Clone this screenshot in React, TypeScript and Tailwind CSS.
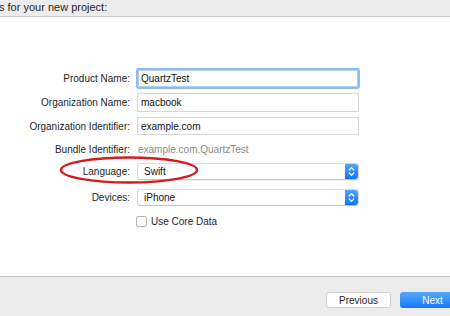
import React from "react";

const font = { fontFamily: '"Liberation Sans", Arial, sans-serif' };

function Label({ children }: { children: React.ReactNode }) {
  return <div className="w-[131px] shrink-0 text-right pr-[1px] text-[10px] text-[#262626]">{children}</div>;
}

function Stepper() {
  return (
    <div className="w-[13px] self-stretch rounded-r-[3px] bg-gradient-to-b from-[#4ea4ff] to-[#0b73f5] flex items-center justify-center">
      <svg width="7" height="11" viewBox="0 0 7 11" fill="none" stroke="white" strokeWidth="1.2" strokeLinecap="round" strokeLinejoin="round">
        <path d="M1.2 4 L3.5 1.7 L5.8 4" />
        <path d="M1.2 7 L3.5 9.3 L5.8 7" />
      </svg>
    </div>
  );
}

export default function App() {
  return (
    <div className="relative w-[450px] h-[316px] overflow-hidden bg-white flex flex-col" style={font}>
      <div className="h-[17px] shrink-0 bg-[#ececec] border-b border-[#c6c6c6] text-[11px] leading-[14px] text-[#262626] -ml-[1px]">
        s for your new project:
      </div>
      <div className="flex-1 bg-white flex flex-col pt-[51px]">
        <div className="flex items-center h-[21px]">
          <Label>Product Name:</Label>
          <div className="ml-[5px] w-[224px] h-[21px] rounded-[3px] border-[2px] border-[#8cbcf2] bg-white flex items-center">
            <div className="flex-1 h-full border border-[#b7cde8] flex items-center pl-[2px] text-[10px] text-[#111]">QuartzTest</div>
          </div>
        </div>
        <div className="flex items-center mt-[4px] h-[19px]">
          <Label>Organization Name:</Label>
          <div className="ml-[6px] w-[222px] h-[19px] border border-[#d6d6d6] bg-white flex items-center pl-[3px] text-[10px] text-[#111]">macbook</div>
        </div>
        <div className="flex items-center mt-[5px] h-[18px]">
          <Label>Organization Identifier:</Label>
          <div className="ml-[6px] w-[222px] h-[18px] border border-[#d6d6d6] bg-white flex items-center pl-[3px] text-[10px] text-[#111]">example.com</div>
        </div>
        <div className="flex items-center mt-[5px] h-[18px]">
          <Label>Bundle Identifier:</Label>
          <div className="ml-[7px] text-[10px] text-[#8a8a8a]">example.com.QuartzTest</div>
        </div>
        <div className="flex items-center mt-[4px] h-[18px]">
          <Label>Language:</Label>
          <div className="ml-[6px] w-[222px] h-[17px] rounded-[3px] border border-[#dcdcdc] border-b-[#c4c4c4] bg-white flex items-stretch shadow-[0_1px_0_rgba(0,0,0,0.05)]">
            <div className="flex-1 flex items-center pl-[6px] text-[10px] text-[#111]">Swift</div>
            <Stepper />
          </div>
        </div>
        <div className="flex items-center mt-[8px] h-[18px]">
          <Label>Devices:</Label>
          <div className="ml-[6px] w-[222px] h-[17px] rounded-[3px] border border-[#dcdcdc] border-b-[#c4c4c4] bg-white flex items-stretch">
            <div className="flex-1 flex items-center pl-[6px] text-[10px] text-[#111]">iPhone</div>
            <Stepper />
          </div>
        </div>
        <div className="flex items-center mt-[8px] h-[14px]">
          <div className="w-[136px] shrink-0" />
          <div className="w-[11px] h-[11px] rounded-[2px] border border-[#b4b4b4] bg-white" />
          <div className="ml-[4px] text-[10px] text-[#262626]">Use Core Data</div>
        </div>
      </div>
      <div className="h-[40px] shrink-0 bg-[#ececec] border-t border-[#c2c2c2] flex items-start pt-[15px]">
        <div className="ml-[326px] w-[65px] shrink-0 h-[16px] rounded-[3px] border border-[#cfcfcf] bg-white flex items-center justify-center text-[10px] text-[#262626]">
          Previous
        </div>
        <div className="ml-[9px] w-[65px] shrink-0 h-[16px] rounded-[3px] bg-gradient-to-b from-[#56a8fd] to-[#1078fb] flex items-center justify-center text-[10px] text-white">
          Next
        </div>
      </div>
      <svg className="absolute left-[57px] top-[154px]" width="144" height="32" viewBox="0 0 144 32">
        <ellipse cx="72" cy="16" rx="68" ry="12.5" fill="none" stroke="#d81a1f" strokeWidth="2.4" />
      </svg>
    </div>
  );
}
